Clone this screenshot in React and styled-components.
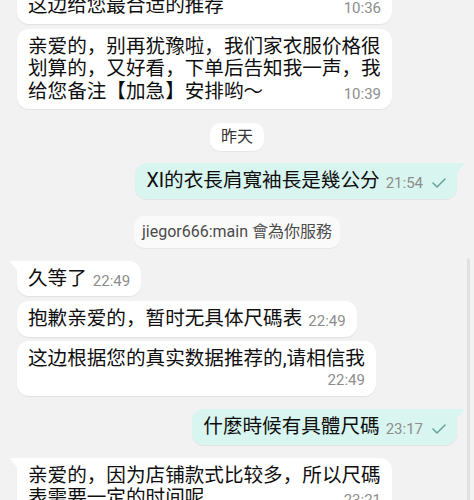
import React from 'react';
import styled, { createGlobalStyle } from 'styled-components';

const GlobalStyle = createGlobalStyle`
    html, body {
        margin: 0;
        padding: 0;
        background: #f2f2f2;
    }
`

const Page = styled.div`
    position: relative;
    width: 474px;
    height: 500px;
    overflow: hidden;
    background: #f2f2f2;
    font-family: "Roboto", "Noto Sans CJK SC", sans-serif;
`

const ChatList = styled.div`
    display: flex;
    flex-direction: column;
    padding: 0 17px;
    margin-top: -12px;
`

const Row = styled.div`
    display: flex;
    justify-content: ${props => props.$align || 'flex-start'};
    margin-top: ${props => props.$gap || 0}px;
`

const Bubble = styled.div`
    position: relative;
    display: flow-root;
    box-sizing: border-box;
    max-width: 375px;
    width: ${props => props.$wide ? '375px' : 'auto'};
    padding: 7px 11px 6px 11px;
    border-radius: 12px;
    background: ${props => props.$out ? '#d9f5f0' : '#ffffff'};
    box-shadow: 0 1px 1px rgba(0, 0, 0, 0.07);
    color: #0e0e0e;
    font-size: 19.6px;
    line-height: 22.5px;
    ${props => props.$tail && !props.$out && 'border-top-left-radius: 0;'}
    ${props => props.$tail && props.$out && 'border-top-right-radius: 0;'}

    &::before {
        content: '';
        display: ${props => props.$tail ? 'block' : 'none'};
        position: absolute;
        top: 0;
        width: 9px;
        height: 11px;
        background: inherit;
        ${props => props.$out
            ? 'right: -8px; clip-path: polygon(0 0, 100% 0, 0 100%);'
            : 'left: -8px; clip-path: polygon(0 0, 100% 0, 100% 100%);'}
    }
`

const Meta = styled.span`
    display: ${props => props.$stacked ? 'block' : 'inline-flex'};
    float: ${props => props.$stacked ? 'none' : 'right'};
    align-items: center;
    gap: 9px;
    margin-left: 6px;
    padding-top: ${props => props.$stacked ? 0 : 2}px;
    margin-bottom: ${props => props.$stacked ? 0 : -2}px;
    text-align: right;
    font-family: "Roboto", sans-serif;
    font-size: 15px;
    line-height: ${props => props.$stacked ? 20 : 22.5}px;
    color: #8d8d8d;
`

const Pill = styled.div`
    box-sizing: border-box;
    height: ${props => props.$height || 28}px;
    line-height: ${props => props.$height || 28}px;
    padding: 0 ${props => props.$pad || 11}px;
    border-radius: 10px;
    background: ${props => props.$bg || '#ffffff'};
    box-shadow: 0 1px 1px rgba(0, 0, 0, 0.05);
    color: ${props => props.$color || '#333'};
    font-size: 16px;
`

const ScrollThumb = styled.div`
    position: absolute;
    right: 4px;
    top: 258px;
    width: 3px;
    height: 260px;
    border-radius: 2px;
    background: #e1e1e1;
`

const Check = () => (
    <svg width="14" height="10" viewBox="0 0 14 10">
        <polyline points="1,5 5,9 13,1" fill="none" stroke="#5fa497" strokeWidth="1.5" strokeLinecap="round" strokeLinejoin="round" />
    </svg>
)

const messages = [
    { kind: 'in', text: '这边给您最合适的推荐', time: '10:36', wide: true, gap: 0 },
    { kind: 'in', text: '亲爱的，别再犹豫啦，我们家衣服价格很划算的，又好看，下单后告知我一声，我给您备注【加急】安排哟～', time: '10:39', gap: 5 },
    { kind: 'date', text: '昨天', gap: 14 },
    { kind: 'out', text: 'XI的衣長肩寬袖長是幾公分', time: '21:54', tail: true, gap: 12 },
    { kind: 'system', text: 'jiegor666:main 會為你服務', gap: 17 },
    { kind: 'in', text: '久等了', time: '22:49', tail: true, gap: 13 },
    { kind: 'in', text: '抱歉亲爱的，暂时无具体尺碼表', time: '22:49', gap: 5 },
    { kind: 'in', text: '这边根据您的真实数据推荐的,请相信我', time: '22:49', stacked: true, gap: 4 },
    { kind: 'out', text: '什麼時候有具體尺碼', time: '23:17', tail: true, gap: 13 },
    { kind: 'in', text: '亲爱的，因为店铺款式比较多，所以尺碼表需要一定的时间呢', time: '23:21', tail: true, gap: 13 },
]

function Message({ msg }) {
    if (msg.kind === 'date') {
        return <Row $align="center" $gap={msg.gap}>
            <Pill>{msg.text}</Pill>
        </Row>
    }

    if (msg.kind === 'system') {
        return <Row $align="center" $gap={msg.gap}>
            <Pill $height={32} $pad={8} $bg="#fafafa" $color="#4a4a4a">{msg.text}</Pill>
        </Row>
    }

    const out = msg.kind === 'out';

    return <Row $align={out ? 'flex-end' : 'flex-start'} $gap={msg.gap}>
        <Bubble $out={out} $tail={msg.tail} $wide={msg.wide}>
            {msg.text}
            <Meta $stacked={msg.stacked}>
                {msg.time}
                {out ? <Check /> : ""}
            </Meta>
        </Bubble>
    </Row>
}

export default function App() {
    return (
        <Page>
            <GlobalStyle />
            <ChatList>
                {messages.map((msg, index) => <Message key={index} msg={msg} />)}
            </ChatList>
            <ScrollThumb />
        </Page>
    );
}
